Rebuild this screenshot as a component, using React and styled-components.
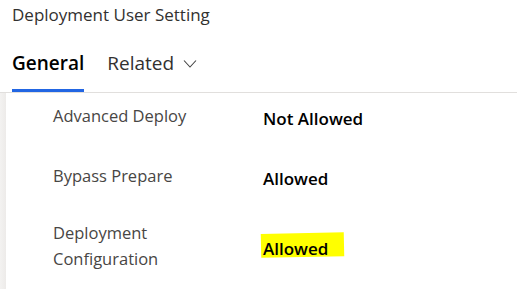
import React from "react";
import styled, { createGlobalStyle } from "styled-components";

const GlobalStyle = createGlobalStyle`
  html, body {
    margin: 0;
    padding: 0;
    background: #ffffff;
    overflow: hidden;
  }
  body {
    font-family: "Open Sans", "Noto Sans", sans-serif;
  }
`;

const fields = [
  { label: "Advanced Deploy", value: "Not Allowed" },
  { label: "Bypass Prepare", value: "Allowed" },
  { label: "Deployment Configuration", value: "Allowed", marked: true },
];

const App = () => {
  return (
    <Page>
      <GlobalStyle />
      <Header>
        <Subtitle>Deployment User Setting</Subtitle>
        <Tabs>
          <Tab $active>General</Tab>
          <Tab>
            Related
            <Chevron viewBox="0 0 14 10">
              <path d="M1 1.5 L7 8 L13 1.5" fill="none" stroke="#444" strokeWidth="1.1" />
            </Chevron>
          </Tab>
        </Tabs>
      </Header>
      <Body>
        <Gutter />
        <Form>
          {fields.map((f) => (
            <Row key={f.label}>
              <Label>{f.label}</Label>
              <Value>
                <ValueText $marked={f.marked}>{f.value}</ValueText>
              </Value>
            </Row>
          ))}
        </Form>
      </Body>
    </Page>
  );
};

export default App;

const Page = styled.div`
  width: 517px;
  height: 289px;
  display: flex;
  flex-direction: column;
  overflow: hidden;
`;

const Header = styled.header`
  display: flex;
  flex-direction: column;
  padding-left: 12px;
  border-bottom: 1px solid #e1dfdd;
`;

const Subtitle = styled.div`
  margin-top: 4px;
  font-size: 17px;
  line-height: 22px;
  color: #323130;
`;

const Tabs = styled.nav`
  display: flex;
  gap: 23px;
  margin-top: 24px;
`;

const Tab = styled.div`
  display: flex;
  align-items: flex-start;
  gap: 9px;
  height: 42px;
  box-sizing: border-box;
  font-size: 19px;
  font-weight: ${({ $active }) => ($active ? 600 : 400)};
  color: ${({ $active }) => ($active ? "#000" : "#323130")};
  border-bottom: 3px solid ${({ $active }) => ($active ? "#2266e3" : "transparent")};
`;

const Chevron = styled.svg`
  width: 14px;
  height: 10px;
  margin-top: 9px;
`;

const Body = styled.main`
  flex: 1;
  display: flex;
`;

const Gutter = styled.div`
  width: 6px;
  background: linear-gradient(90deg, #f3f2f1, #edebe9);
`;

const Form = styled.section`
  flex: 1;
  display: flex;
  flex-direction: column;
  padding: 7px 0 0 47px;
  gap: 28px;
`;

const Row = styled.div`
  display: grid;
  grid-template-columns: 210px 1fr;
  align-items: center;
`;

const Label = styled.div`
  font-size: 16.5px;
  line-height: 26px;
  color: #484644;
  width: 145px;
`;

const Value = styled.div`
  padding-top: 6px;
  line-height: 26px;
`;

const ValueText = styled.span`
  position: relative;
  z-index: 0;
  display: inline-block;
  font-size: 17px;
  line-height: 26px;
  font-weight: 600;
  color: #000;

  &::before {
    content: "";
    display: ${({ $marked }) => ($marked ? "block" : "none")};
    position: absolute;
    left: -2px;
    right: -16px;
    top: -3px;
    bottom: 5px;
    background: #ffff00;
    transform: rotate(-1.2deg);
    z-index: -1;
  }
`;
